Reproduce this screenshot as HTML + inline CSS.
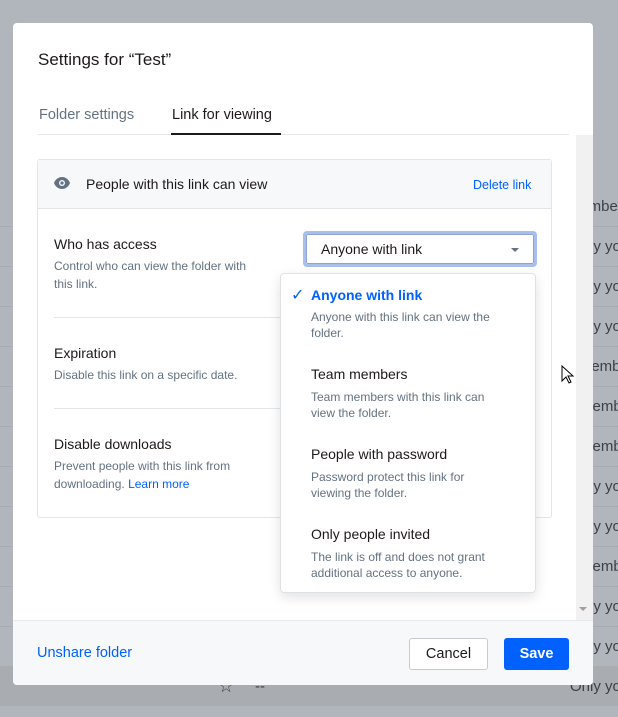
<!DOCTYPE html>
<html><head><style>
*{box-sizing:border-box;margin:0;padding:0}
body{width:618px;height:717px;overflow:hidden;background:#b1b6bd;font-family:"Liberation Sans",sans-serif;position:relative}
.bgt{position:absolute;left:570px;font-size:15px;color:#3d4147;white-space:nowrap}
.bgl{position:absolute;left:0;width:618px;height:1px;background:#a6abb2}
.modal{position:absolute;left:13px;top:23px;width:580px;height:662px;background:#fff;border-radius:4px;overflow:hidden}
.abs{position:absolute}
h1{position:absolute;left:25px;top:27px;font-size:17px;font-weight:normal;color:#1e1919}
.tab{position:absolute;top:84px;font-size:14.5px}
.card{position:absolute;left:24px;top:136px;width:515px;height:359px;border:1px solid #e3e5e8;border-radius:3px}
.lbl{font-size:14px;color:#1e1919;position:absolute}
.sub{font-size:12px;color:#637282;line-height:18px;position:absolute}
.menu{position:absolute;left:280px;top:273px;width:256px;height:320px;background:#fff;border:1px solid #dfe2e5;border-radius:4px;box-shadow:0 4px 12px rgba(0,0,0,.12)}
.mi{position:absolute;left:30px;font-size:14px;color:#1e1919}
.ms{position:absolute;left:30px;font-size:12px;color:#637282;line-height:16px;width:195px}
</style></head><body>
<div class="bgl" style="top:226px"></div><div class="bgl" style="top:266px"></div><div class="bgl" style="top:306px"></div><div class="bgl" style="top:346px"></div><div class="bgl" style="top:386px"></div><div class="bgl" style="top:426px"></div><div class="bgl" style="top:466px"></div><div class="bgl" style="top:506px"></div><div class="bgl" style="top:546px"></div><div class="bgl" style="top:586px"></div><div class="bgl" style="top:626px"></div><div class="bgl" style="top:666px"></div>
<div class="abs" style="left:0;top:666px;width:618px;height:40px;background:#a9adb1"></div>
<div class="bgt" style="top:198px;left:527px">Team members</div>
<div class="bgt" style="top:238px">Only you</div>
<div class="bgt" style="top:278px">Only you</div>
<div class="bgt" style="top:318px">Only you</div>
<div class="bgt" style="top:358px;left:538px">Team members</div>
<div class="bgt" style="top:398px;left:580px">Members</div>
<div class="bgt" style="top:438px;left:580px">Members</div>
<div class="bgt" style="top:478px">Only you</div>
<div class="bgt" style="top:518px">Only you</div>
<div class="bgt" style="top:558px;left:580px">Members</div>
<div class="bgt" style="top:598px">Only you</div>
<div class="bgt" style="top:638px">Only you</div>
<div class="bgt" style="top:678px">Only you</div>
<div class="bgt" style="top:676px;left:218px;font-size:18px">☆</div>
<div class="bgt" style="top:678px;left:255px">--</div>
<div class="modal">
<h1>Settings for “Test”</h1>
<div class="tab" style="left:26px;color:#637282">Folder settings</div>
<div class="tab" style="left:159px;color:#1e1919">Link for viewing</div>
<div class="abs" style="left:25px;top:111px;width:531px;height:1px;background:#e6e8eb"></div>
<div class="abs" style="left:158px;top:110px;width:110px;height:2px;background:#1e1919"></div>
<div class="abs" style="left:563px;top:112px;width:17px;height:508px;background:#f1f1f1"></div>
<div class="abs" style="left:566px;top:584px;width:0;height:0;border-left:4px solid transparent;border-right:4px solid transparent;border-top:4px solid #a0a0a0"></div>
<div class="card">
 <div class="abs" style="left:0;top:0;width:513px;height:49px;background:#f7f8fa;border-bottom:1px solid #e3e5e8"></div>
 <svg class="abs" style="left:15px;top:16px" width="18" height="14" viewBox="0 0 18 14"><path d="M9 1C5 1 2 4 1 7c1 3 4 6 8 6s7-3 8-6c-1-3-4-6-8-6z" fill="#637282"/><circle cx="9" cy="7" r="3" fill="#f7f8fa"/><circle cx="9" cy="7" r="1.6" fill="#637282"/></svg>
 <div class="lbl" style="left:48px;top:16px">People with this link can view</div>
 <div class="abs" style="left:435px;top:18px;font-size:12.5px;color:#0061fe">Delete link</div>
 <div class="lbl" style="left:16px;top:76px">Who has access</div>
 <div class="sub" style="left:16px;top:97px;width:205px">Control who can view the folder with this link.</div>
 <div class="abs" style="left:16px;top:157px;width:230px;height:1px;background:#e3e5e8"></div>
 <div class="lbl" style="left:16px;top:185px">Expiration</div>
 <div class="sub" style="left:16px;top:206px">Disable this link on a specific date.</div>
 <div class="abs" style="left:16px;top:248px;width:230px;height:1px;background:#e3e5e8"></div>
 <div class="lbl" style="left:16px;top:276px">Disable downloads</div>
 <div class="sub" style="left:16px;top:297px;width:205px">Prevent people with this link from downloading. <span style="color:#0061fe">Learn more</span></div>
</div>
</div>
<div class="abs" style="left:303px;top:231px;width:234px;height:36px;border:3px solid #a9bfe9;border-radius:4px;background:#fff"><div class="abs" style="left:0;top:0;right:0;bottom:0;border:1px solid #8aa3d8;border-radius:2px"></div>
 <div class="abs" style="left:15px;top:7px;font-size:14px;color:#1e1919">Anyone with link</div>
 <div class="abs" style="left:205px;top:14px;width:0;height:0;border-left:4px solid transparent;border-right:4px solid transparent;border-top:4px solid #637282"></div>
</div>
<div class="menu">
 <div class="abs" style="left:10px;top:11px;font-size:16px;color:#0061fe">✓</div>
 <div class="mi" style="top:13px;color:#0061fe;font-weight:bold">Anyone with link</div>
 <div class="ms" style="top:35px">Anyone with this link can view the folder.</div>
 <div class="mi" style="top:92px">Team members</div>
 <div class="ms" style="top:115px">Team members with this link can view the folder.</div>
 <div class="mi" style="top:172px">People with password</div>
 <div class="ms" style="top:195px;width:180px">Password protect this link for viewing the folder.</div>
 <div class="mi" style="top:252px">Only people invited</div>
 <div class="ms" style="top:275px">The link is off and does not grant additional access to anyone.</div>
</div>
<svg class="abs" style="left:561px;top:365px" width="14" height="20" viewBox="0 0 14 20"><path d="M1 1v15l4-4 3 6 2-1-3-6h5z" fill="#fff" stroke="#000" stroke-width="1"/></svg>
<div class="abs" style="left:13px;top:620px;width:580px;height:65px;background:#f7f8fa;border-top:1px solid #e6e8eb;border-radius:0 0 4px 4px">
 <div class="abs" style="left:24px;top:24px;font-size:14.5px;color:#0061fe">Unshare folder</div>
 <div class="abs" style="left:396px;top:17px;width:79px;height:32px;border:1px solid #c7cbd0;border-radius:3px;background:#fff;font-size:14.5px;color:#1e1919;text-align:center;line-height:30px">Cancel</div>
 <div class="abs" style="left:491px;top:17px;width:65px;height:32px;border-radius:3px;background:#0061fe;font-size:14.5px;color:#fff;font-weight:bold;text-align:center;line-height:32px">Save</div>
</div>
</body></html>
